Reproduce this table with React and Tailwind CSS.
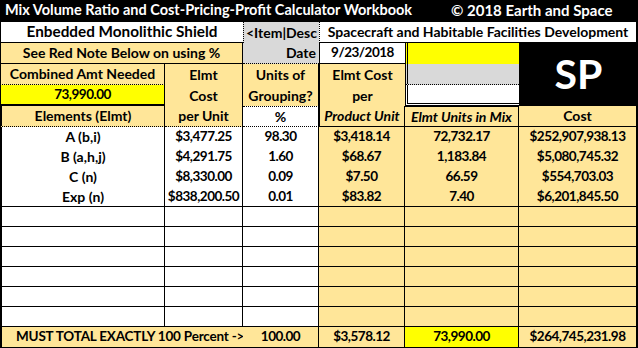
import React from "react";

const COLS = "grid grid-cols-[165px_78px_76px_86px_114px_117px_2px]";
const TAN = "bg-[#ffe699]";
const NUM = "text-[13.5px] tracking-[-0.5px]";

const data = [
  ["A (b,i)", "$3,477.25", "98.30", "$3,418.14", "72,732.17", "$252,907,938.13"],
  ["B (a,h,j)", "$4,291.75", "1.60", "$68.67", "1,183.84", "$5,080,745.32"],
  ["C (n)", "$8,330.00", "0.09", "$7.50", "66.59", "$554,703.03"],
  ["Exp (n)", "$838,200.50", "0.01", "$83.82", "7.40", "$6,201,845.50"],
  ["", "", "", "", "", ""],
  ["", "", "", "", "", ""],
  ["", "", "", "", "", ""],
  ["", "", "", "", "", ""],
  ["", "", "", "", "", ""],
  ["", "", "", "", "", ""],
];

function DataRow({ r, i }) {
  const line = i >= 3 ? "border-b border-black" : "";
  return (
    <div className={`${COLS} h-[20px]`}>
      <div className={`bg-white border-l-2 border-r border-black flex items-center justify-center ${line}`}>{r[0]}</div>
      <div className={`bg-white border-r border-black flex items-center justify-center ${NUM} ${line}`}>{r[1]}</div>
      <div className={`bg-white border-r border-black flex items-center justify-center ${NUM} ${line}`}>{r[2]}</div>
      <div className={`${TAN} border-r border-black flex items-center justify-center ${NUM} ${line}`}>{r[3]}</div>
      <div className={`${TAN} border-r border-black flex items-center justify-center ${NUM} ${line}`}>{r[4]}</div>
      <div className={`${TAN} flex items-center justify-center ${NUM} ${line}`}>{r[5]}</div>
      <div className="bg-black"></div>
    </div>
  );
}

export default function App() {
  return (
    <div className="w-[638px] h-[348px] bg-black flex flex-col font-['Lato',sans-serif] font-bold text-[14px] leading-none text-black overflow-hidden whitespace-nowrap">
      {/* title */}
      <div className="h-[22px] flex items-center text-white border-b border-black">
        <span className="w-[451px] pl-[5px] text-[14.5px]">Mix Volume Ratio and Cost-Pricing-Profit Calculator Workbook</span>
        <span className="text-[15px]">© 2018 Earth and Space</span>
      </div>
      {/* header grid */}
      <div className={`${COLS} grid-rows-[21px_21px_21px_21px_21px]`}>
        {/* row 2 */}
        <div className="col-start-1 col-span-2 row-start-1 bg-white border-l border-b border-black flex items-center justify-center text-[15.3px]">
          Enbedded Monolithic Shield
        </div>
        <div className="col-start-3 row-start-1 bg-[#d9d9d9] border-l border-dotted border-black flex items-center justify-end pr-[2px]">
          &lt;Item|Desc
        </div>
        <div className="col-start-4 col-span-3 row-start-1 bg-white border-l border-b border-dotted border-black [border-bottom-style:solid] flex items-center justify-center">
          Spacecraft and Habitable Facilities Development
        </div>
        {/* row 3 */}
        <div className={`col-start-1 col-span-2 row-start-2 ${TAN} border-l border-b border-r border-black flex items-center justify-center`}>
          See Red Note Below on using %
        </div>
        <div className="col-start-3 row-start-2 bg-[#d9d9d9] border-b border-dotted border-black flex items-center justify-end pr-[3px]">
          Date
        </div>
        <div className={`col-start-4 row-start-2 bg-white border-b border-l border-black flex items-center justify-center ${NUM}`}>
          9/23/2018
        </div>
        <div className="col-start-5 row-start-2 bg-[#ffff00] border-l-[3px] border-double border-black"></div>
        <div className="col-start-6 col-span-2 row-start-2 row-span-3 bg-black text-white flex items-center justify-center text-[41px] pb-[2px]">
          SP
        </div>
        {/* row 4 */}
        <div className={`col-start-1 row-start-3 ${TAN} border-l border-r border-b border-black [border-bottom-style:dotted] flex items-center justify-center`}>
          Combined Amt Needed
        </div>
        <div className={`col-start-2 row-start-3 ${TAN} border-r border-black flex items-center justify-center`}>Elmt</div>
        <div className={`col-start-3 row-start-3 ${TAN} border-r border-black flex items-center justify-center`}>Units of</div>
        <div className={`col-start-4 row-start-3 ${TAN} border-l border-black flex items-center justify-center`}>Elmt Cost</div>
        <div className="col-start-5 row-start-3 bg-[#d9d9d9] border-l-[3px] border-b border-double border-black [border-bottom-style:dotted]"></div>
        {/* row 5 */}
        <div className={`col-start-1 row-start-4 bg-[#ffff00] border-l border-r border-b-2 border-black flex items-center justify-center ${NUM}`}>
          73,990.00
        </div>
        <div className={`col-start-2 row-start-4 ${TAN} border-r border-black flex items-center justify-center`}>Cost</div>
        <div className={`col-start-3 row-start-4 ${TAN} border-r border-black flex items-center justify-center`}>Grouping?</div>
        <div className={`col-start-4 row-start-4 ${TAN} border-l border-black flex items-center justify-center`}>per</div>
        <div className="col-start-5 row-start-4 bg-white border-l-[3px] border-b-[3px] border-double border-black"></div>
        {/* row 6 */}
        <div className={`col-start-1 row-start-5 ${TAN} border-l-2 border-r border-b border-black [border-bottom-style:dotted] flex items-center justify-center`}>
          Elements (Elmt)
        </div>
        <div className={`col-start-2 row-start-5 ${TAN} border-r border-b border-black [border-bottom-style:dotted] flex items-center justify-center`}>
          per Unit
        </div>
        <div className="col-start-3 row-start-5 bg-white border-r border-t border-b border-black [border-bottom-style:dotted] [border-top-style:dotted] flex items-center justify-center">
          %
        </div>
        <div className={`col-start-4 row-start-5 ${TAN} border-l border-r border-b border-black flex items-center justify-center italic`}>
          Product Unit
        </div>
        <div className={`col-start-5 row-start-5 ${TAN} border-r border-b border-t border-black flex items-center justify-center italic`}>
          Elmt Units in Mix
        </div>
        <div className={`col-start-6 row-start-5 ${TAN} border-b border-black flex items-center justify-center`}>
          Cost
        </div>
        <div className="col-start-7 row-start-1 row-span-5 bg-black"></div>
      </div>
      {/* data rows */}
      {data.map((r, i) => (
        <DataRow key={i} r={r} i={i} />
      ))}
      {/* total row */}
      <div className={`${COLS} h-[21px]`}>
        <div className={`col-span-2 ${TAN} border-l-2 border-b border-black flex items-center pl-[14px] text-[13.5px] tracking-[-0.2px]`}>
          MUST TOTAL EXACTLY 100 Percent -&gt;
        </div>
        <div className={`${TAN} border-r border-b border-black flex items-center justify-center ${NUM}`}>100.00</div>
        <div className={`${TAN} border-r border-b border-black flex items-center justify-center ${NUM}`}>$3,578.12</div>
        <div className={`bg-[#ffff00] border-r border-b border-black flex items-center justify-center ${NUM}`}>73,990.00</div>
        <div className={`${TAN} border-b border-black flex items-center justify-center ${NUM}`}>$264,745,231.98</div>
        <div className="bg-black"></div>
      </div>
    </div>
  );
}
